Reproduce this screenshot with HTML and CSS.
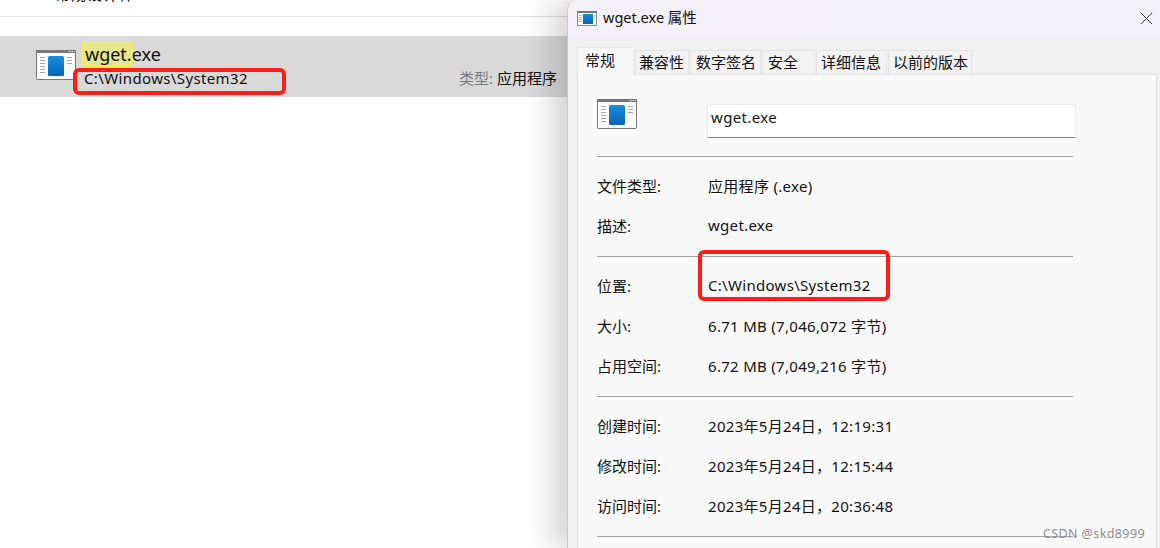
FILE: index.html
```html
<!DOCTYPE html>
<html lang="zh-CN">
<head>
<meta charset="utf-8">
<title>wget.exe 属性</title>
<link rel="stylesheet" href="styles.css">
</head>
<body>
<div class="screen">
  <section class="results">
    <div class="results-head"><span class="cut-text">常规设计件</span></div>
    <div class="result-row">
      <svg class="exe-icon" viewBox="0 0 40 30"><use href="#exe"/></svg>
      <div class="result-text">
        <div class="result-name"><mark class="hit">wget.</mark>exe</div>
        <div class="result-path">C:\Windows\System32</div>
      </div>
      <div class="result-type"><span class="type-label">类型:</span> 应用程序</div>
    </div>
    <div class="redbox redbox-left"></div>
  </section>
  <section class="dialog">
    <header class="titlebar">
      <svg class="title-icon" viewBox="0 0 20 15">
        <rect x=".5" y=".5" width="19" height="14" fill="#fbfbfb" stroke="#8b8b8e"/>
        <rect x="0" y="0" width="20" height="2" fill="#77777a"/>
        <rect x="6" y="3" width="10" height="10" fill="url(#blue)"/>
        <path d="M2 4.500h3M2 6.500h3M2 8.500h3M2 10.500h3M17 4.500h1.500M17 6.500h1.500" stroke="#b5b5b5" stroke-width="1"/>
      </svg>
      <span class="title-text">wget.exe 属性</span>
      <svg class="close" viewBox="0 0 14 14"><path d="M1 1 13 13M13 1 1 13"/></svg>
    </header>
    <div class="dialog-body">
      <nav class="tabs">
        <div class="tab tab-active">常规</div>
        <div class="tab tab-compat">兼容性</div>
        <div class="tab tab-sign">数字签名</div>
        <div class="tab tab-sec">安全</div>
        <div class="tab tab-detail">详细信息</div>
        <div class="tab tab-prev">以前的版本</div>
      </nav>
      <div class="panel">
        <div class="name-row">
          <svg class="exe-icon" viewBox="0 0 40 30"><use href="#exe"/></svg>
          <div class="name-input">wget.exe</div>
        </div>
        <div class="rule"></div>
        <div class="group">
          <div class="row"><span class="label">文件类型:</span><span class="value">应用程序 (.exe)</span></div>
          <div class="row"><span class="label">描述:</span><span class="value">wget.exe</span></div>
        </div>
        <div class="rule"></div>
        <div class="group triple">
          <div class="row"><span class="label">位置:</span><span class="value">C:\Windows\System32</span></div>
          <div class="row"><span class="label">大小:</span><span class="value">6.71 MB (7,046,072 字节)</span></div>
          <div class="row"><span class="label">占用空间:</span><span class="value">6.72 MB (7,049,216 字节)</span></div>
        </div>
        <div class="rule"></div>
        <div class="group triple">
          <div class="row"><span class="label">创建时间:</span><span class="value">2023年5月24日，12:19:31</span></div>
          <div class="row"><span class="label">修改时间:</span><span class="value">2023年5月24日，12:15:44</span></div>
          <div class="row"><span class="label">访问时间:</span><span class="value">2023年5月24日，20:36:48</span></div>
        </div>
        <div class="rule"></div>
      </div>
    </div>
    <div class="redbox redbox-right"></div>
  </section>
  <div class="watermark">CSDN @skd8999</div>
</div>
<svg class="defs" width="0" height="0" aria-hidden="true">
  <defs>
    <linearGradient id="blue" x1="0" y1="0" x2="0" y2="1">
      <stop offset="0" stop-color="#1a8fdc"/>
      <stop offset="1" stop-color="#0566b4"/>
    </linearGradient>
    <symbol id="exe" viewBox="0 0 40 30">
      <rect x=".5" y=".5" width="39" height="29" rx="1" fill="#fbfbfb" stroke="#77777a"/>
      <rect x="0" y="0" width="40" height="3" fill="#77777a"/>
      <path d="M33 1.500h1.500M35.500 1.500h1.500M38 1.500h1" stroke="#e8e8e8" stroke-width="1"/>
      <rect x="12" y="6" width="16" height="20" rx="1.500" fill="url(#blue)"/>
      <path d="M4 7.500h5M4 10.500h5M4 13.500h5M4 16.500h5M4 19.500h5M4 22.500h5M31 7.500h5M31 10.500h5M31 13.500h5" stroke="#a9a9a9" stroke-width="1"/>
    </symbol>
  </defs>
</svg>
</body>
</html>
```
FILE: styles.css
```css
* { box-sizing: border-box; }
html, body { margin: 0; padding: 0; }
body {
  width: 1160px;
  height: 548px;
  overflow: hidden;
  background: #fff;
  color: #111;
  font-family: "Noto Sans", "Noto Sans CJK SC", sans-serif;
  font-size: 15px;
}
.screen {
  position: relative;
  display: flex;
  width: 1160px;
  height: 548px;
  overflow: hidden;
}
.defs { position: absolute; }

/* Search results */
.results {
  position: relative;
  width: 567px;
  flex: none;
}
.results-head {
  height: 17px;
  border-bottom: 1px solid #e0e0e0;
  padding-left: 55px;
  overflow: hidden;
}
.cut-text {
  display: block;
  margin-top: -17px;
  font-size: 15px;
  line-height: 22px;
  letter-spacing: 1px;
}
.result-row {
  display: flex;
  align-items: flex-start;
  height: 61px;
  margin-top: 19px;
  padding-left: 36px;
  background: #d9d9d9;
}
.exe-icon {
  display: block;
  flex: none;
  width: 40px;
  height: 30px;
}
.result-row .exe-icon { margin-top: 14px; }
.result-text {
  width: 375px;
  flex: none;
  margin-left: 8px;
  padding-top: 6px;
}
.result-name {
  font-size: 18px;
  line-height: 25px;
  height: 25px;
}
.hit {
  display: inline-block;
  height: 24px;
  padding-left: 2px;
  margin-left: -1px;
  background: #e6e68f;
  color: inherit;
  box-shadow: 0 0 0 1px #f3f33f;
  border-radius: 3px;
}
.result-path {
  font-size: 15px;
  line-height: 22px;
  letter-spacing: .37px;
}
.result-type {
  margin-top: 31px;
  white-space: nowrap;
  line-height: 22px;
}
.type-label { color: #7a7a7a; }

/* Annotation marks */
.redbox {
  position: absolute;
  border: 4px solid #fb1d16;
  border-radius: 6px;
}
.redbox-left { left: 73px; top: 68px; width: 213px; height: 27px; }
.redbox-right { left: 130px; top: 250px; width: 192px; height: 51px; }

/* Properties dialog */
.dialog {
  position: relative;
  flex: 1;
  display: flex;
  flex-direction: column;
  border-left: 1px solid #c9c9c9;
  border-top-left-radius: 10px;
  background: #f0f0f0;
  box-shadow: -14px 0 30px rgba(0, 0, 0, .18);
}
.titlebar {
  display: flex;
  align-items: center;
  flex: none;
  height: 37px;
  padding: 0 0 1px 9px;
  background: linear-gradient(90deg, #f5f0f8, #f2f2f8);
  border-top-left-radius: 10px;
}
.title-icon { width: 20px; height: 15px; flex: none; }
.title-text {
  margin: 0 0 3px 6px;
  font-size: 14.5px;
}
.close {
  width: 13px;
  height: 13px;
  margin-left: auto;
  margin-right: 7px;
  fill: none;
  stroke: #222;
  stroke-width: 1;
}
.dialog-body {
  flex: none;
  height: 520px;
  padding: 10px 3px 0 9px;
  display: flex;
  flex-direction: column;
}
.tabs {
  display: flex;
  align-items: flex-end;
  gap: 1px;
  height: 27px;
  flex: none;
  position: relative;
  z-index: 1;
}
.tab {
  height: 24px;
  background: #f2f2f2;
  border: 1px solid #e4e4e4;
  border-bottom: 0;
  line-height: 23px;
  padding-left: 3px;
  font-size: 15px;
  white-space: nowrap;
}
.tab-active {
  width: 57px;
  height: 28px;
  margin-bottom: -1px;
  padding-left: 7px;
  line-height: 24px;
  background: #f9f9f9;
  border-color: #e6e6e6;
}
.tab-compat { width: 54px; }
.tab-sign { width: 71px; padding-left: 5px; }
.tab-sec { width: 53px; padding-left: 5px; }
.tab-detail { width: 71px; padding-left: 4px; }
.tab-prev { width: 84px; padding-left: 4px; }
.panel {
  flex: 1;
  background: #f9f9f9;
  border: 1px solid #e4e4e4;
  padding: 24px 0 0 19px;
}
.name-row {
  display: flex;
  align-items: flex-start;
  height: 57px;
}
.name-input {
  width: 369px;
  height: 34px;
  margin: 5px 0 0 70px;
  padding-left: 3px;
  background: #fff;
  border: 1px solid #ececec;
  border-bottom-color: #858585;
  line-height: 25px;
  font-size: 15px;
  letter-spacing: .35px;
}
.rule {
  width: 476px;
  height: 1px;
  background: #a6a6a6;
}
.group { height: 99px; padding-top: 8px; }
.group.triple { height: 139px; }
.row {
  display: flex;
  align-items: center;
  height: 40px;
  font-size: 15px;
}
.label { width: 111px; flex: none; }
.value { letter-spacing: .3px; }
.watermark {
  position: absolute;
  right: 15px;
  bottom: 6px;
  color: #8e8e8e;
  font-size: 12.5px;
  line-height: 16px;
  letter-spacing: .4px;
}
```
